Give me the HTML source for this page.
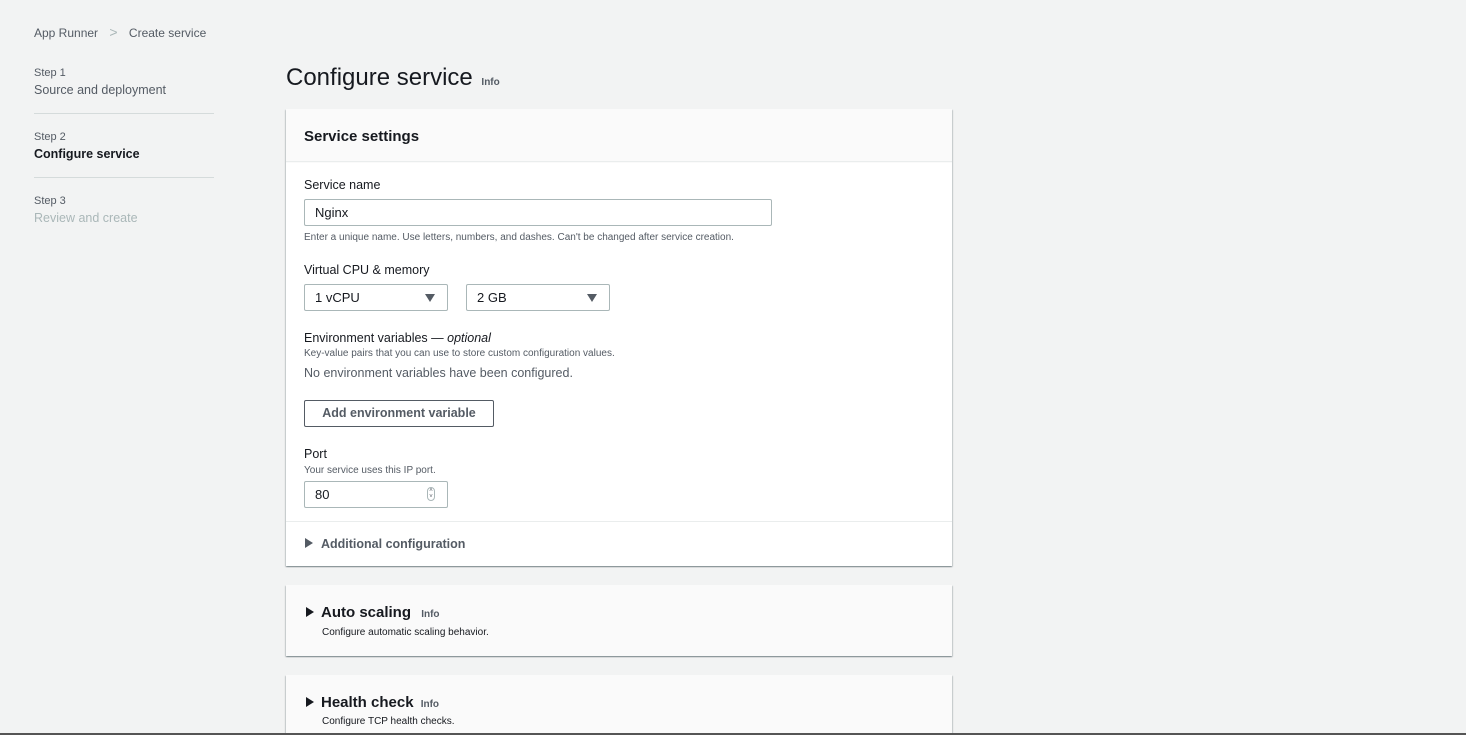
<!DOCTYPE html>
<html style="overflow:hidden;height:735px"><head><style>
*{box-sizing:border-box;margin:0;padding:0}
body{width:1466px;height:735px;overflow:hidden;background:#f2f3f3;font-family:"Liberation Sans",sans-serif;color:#16191f;position:relative}
.a{position:absolute;white-space:nowrap}
.card{position:absolute;left:286px;width:666px;background:#fafafa;box-shadow:0 1px 1px rgba(0,28,36,.3),1px 1px 1px rgba(0,28,36,.15),-1px 1px 1px rgba(0,28,36,.15)}
.inp{position:absolute;background:#fff;border:1px solid #aab7b8;border-radius:2px;font-size:13px;padding:0 10px;display:flex;align-items:center}
.tri{position:absolute;width:0;height:0;border-left:5px solid transparent;border-right:5px solid transparent;border-top:8px solid #545b64}
.rt{display:inline-block;width:0;height:0;border-top:5px solid transparent;border-bottom:5px solid transparent;border-left:8px solid #16191f}
.sm{font-size:10px;color:#545b64}
</style></head><body>
<div class="a" style="left:34px;top:24px;font-size:12px;color:#545b64">App Runner <span style="color:#aab7b8;margin:0 8px;font-size:14px">&gt;</span> Create service</div>
<div class="a" style="left:34px;top:67px;font-size:11px;color:#545b64">Step 1</div>
<div class="a" style="left:34px;top:83px;font-size:12.5px;color:#545b64">Source and deployment</div>
<div class="a" style="left:34px;top:113px;width:180px;height:1px;background:#d5dbdb"></div>
<div class="a" style="left:34px;top:131px;font-size:11px;color:#545b64">Step 2</div>
<div class="a" style="left:34px;top:147px;font-size:12.5px;font-weight:bold">Configure service</div>
<div class="a" style="left:34px;top:177px;width:180px;height:1px;background:#d5dbdb"></div>
<div class="a" style="left:34px;top:195px;font-size:11px;color:#545b64">Step 3</div>
<div class="a" style="left:34px;top:211px;font-size:12.5px;color:#aab7b8">Review and create</div>

<div class="a" style="left:286px;top:64px;font-size:24px">Configure service <span style="font-size:10px;font-weight:bold;color:#545b64;margin-left:2px">Info</span></div>

<div class="card" style="top:109px;height:457px">
 <div style="height:53px;border-bottom:1px solid #eaeded;padding:19px 18px;font-size:15px;font-weight:bold">Service settings</div>
 <div style="position:absolute;top:54px;left:0;right:0;height:358px;background:#fff"></div>
 <div style="position:absolute;top:412px;left:0;right:0;height:45px;background:#fff;border-top:1px solid #eaeded"></div>
</div>
<div class="a" style="left:304px;top:178px;font-size:12.5px">Service name</div>
<div class="inp" style="left:304px;top:199px;width:468px;height:27px">Nginx</div>
<div class="a sm" style="left:304px;top:232px">Enter a unique name. Use letters, numbers, and dashes. Can't be changed after service creation.</div>
<div class="a" style="left:304px;top:263px;font-size:12.5px">Virtual CPU &amp; memory</div>
<div class="inp" style="left:304px;top:284px;width:144px;height:27px">1 vCPU</div><div class="tri" style="left:425px;top:294px"></div>
<div class="inp" style="left:466px;top:284px;width:144px;height:27px">2 GB</div><div class="tri" style="left:587px;top:294px"></div>
<div class="a" style="left:304px;top:331px;font-size:12.5px">Environment variables — <i>optional</i></div>
<div class="a sm" style="left:304px;top:348px">Key-value pairs that you can use to store custom configuration values.</div>
<div class="a" style="left:304px;top:366px;font-size:12.5px;color:#545b64">No environment variables have been configured.</div>
<div class="a" style="left:304px;top:400px;width:190px;height:27px;border:1px solid #545b64;border-radius:2px;background:#fff;font-size:12.5px;font-weight:bold;color:#545b64;text-align:center;line-height:25px">Add environment variable</div>
<div class="a" style="left:304px;top:447px;font-size:12.5px">Port</div>
<div class="a sm" style="left:304px;top:465px">Your service uses this IP port.</div>
<div class="inp" style="left:304px;top:481px;width:144px;height:27px">80</div>
<div class="a" style="left:427px;top:487px;width:8px;height:14px;border:1px solid #aab7b8;border-radius:4px;font-size:6px;line-height:6px;text-align:center;color:#545b64">˄<br>˅</div>
<div class="a" style="left:305px;top:537px;font-size:12.5px;font-weight:bold;color:#545b64"><span class="rt" style="border-left-color:#545b64;margin-right:8px"></span>Additional configuration</div>

<div class="card" style="top:585px;height:71px"></div>
<div class="a" style="left:306px;top:604px;font-size:15px;font-weight:bold"><span class="rt" style="margin-right:7px"></span>Auto scaling <span style="font-size:10px;color:#545b64;margin-left:6px">Info</span></div>
<div class="a sm" style="left:322px;top:627px;color:#16191f">Configure automatic scaling behavior.</div>

<div class="card" style="top:675px;height:70px"></div>
<div class="a" style="left:306px;top:694px;font-size:15px;font-weight:bold"><span class="rt" style="margin-right:7px"></span>Health check <span style="font-size:10px;color:#545b64;margin-left:3px">Info</span></div>
<div class="a sm" style="left:322px;top:716px;color:#16191f">Configure TCP health checks.</div>
<div class="a" style="left:0;top:733px;width:1466px;height:2px;background:#555"></div>
</body></html>
